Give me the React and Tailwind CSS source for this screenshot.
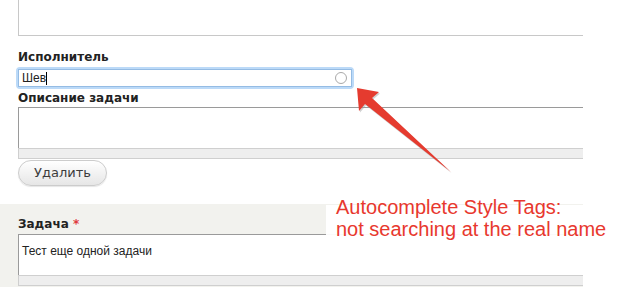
export default function App() {
    return (
        <div className="relative w-[620px] h-[287px] overflow-hidden bg-white font-['DejaVu_Sans',sans-serif] text-[#222]">

            {/* top textarea (cut off) */}
            <div className="ml-[18px] w-[565px] h-[36px] border-l border-b border-[#c8c8c8] bg-white" />

            {/* ИСПОЛНИТЕЛЬ */}
            <div className="pl-[18px] pt-[13px]">
                <label className="block text-[12px] leading-[16px] font-bold">Исполнитель</label>
                <div className="mt-[2px] -ml-[2px] w-[338px] h-[22px] rounded-[4px] border-[2px] border-[#bcdaf8] flex items-center">
                    <div className="flex-1 h-[18px] border border-[#95bce4] bg-white flex items-center pl-[3px] pr-[4px]">
                        <span className="text-[12px] leading-[14px] font-['Liberation_Sans',sans-serif]">Шев</span>
                        <span className="w-px h-[13px] bg-black" />
                        <span className="ml-auto w-[12px] h-[12px] rounded-full border-[1.5px] border-[#a9a9a9]" />
                    </div>
                </div>

                {/* ОПИСАНИЕ ЗАДАЧИ */}
                <label className="block mt-[1px] text-[12px] leading-[16px] font-bold">Описание задачи</label>
                <div className="mt-[1px] w-[565px]">
                    <div className="h-[41px] border-t border-l border-[#9a9a9a] bg-white" />
                    <div className="h-[11px] bg-[#eeeeee] border-t border-b border-[#cfcfcf] border-l" />
                </div>

                <button className="mt-[1px] w-[89px] h-[26px] rounded-full border border-[#cccccc] bg-gradient-to-b from-white to-[#e6e6e6] text-[13px] text-[#3c3c3c] shadow-[0_1px_1px_rgba(0,0,0,0.1)]">
                    Удалить
                </button>
            </div>

            {/* ЗАДАЧА */}
            <div className="mt-[18px] w-[583px] h-[90px] bg-[#f2f2ee] pl-[18px] pt-[12px]">
                <label className="block text-[12px] leading-[16px] font-bold">
                    Задача <span className="text-[#e0393e]">*</span>
                </label>
                <div className="mt-[2px] w-[565px]">
                    <div className="h-[41px] border-t border-l border-[#9a9a9a] bg-white pl-[3px] pt-[3px]">
                        <span className="text-[12px] leading-[14px] font-['Liberation_Sans',sans-serif]">Тест еще одной задачи</span>
                    </div>
                    <div className="h-[11px] bg-[#eeeeee] border-t border-b border-l border-[#cfcfcf]" />
                </div>
            </div>

            {/* annotation */}
            <div className="absolute left-[326px] top-[205px] w-[290px] h-[31px] bg-white/95" />
            <div className="absolute left-[336px] top-[196px] text-[20px] leading-[22px] text-[#e8382e] font-['Liberation_Sans',sans-serif] whitespace-nowrap">
                Autocomplete Style Tags:<br />not searching at the real name
            </div>

            {/* arrow */}
            <svg className="absolute left-0 top-0" width="620" height="287" viewBox="0 0 620 287">
                <polygon points="357,88 379,92 372,98 451,172 365,104 359,111" fill="#9a9a9a" opacity="0.45" transform="translate(1,1.5)" />
                <polygon points="357,88 379,92 372,98 451,172 365,104 359,111" fill="#e53b2f" />
            </svg>
        </div>
    );
}
